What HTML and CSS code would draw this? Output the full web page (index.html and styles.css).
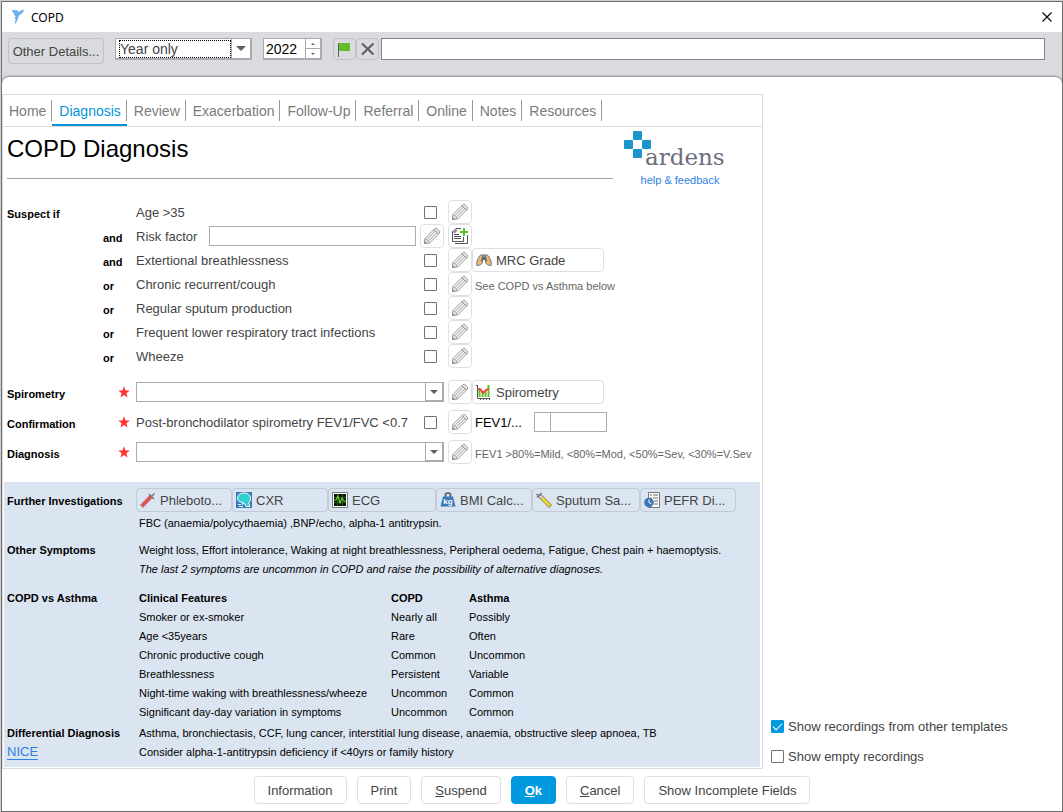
FILE: index.html
```html
<!DOCTYPE html>
<html lang="en">
<head>
    <meta charset="UTF-8">
    <meta name="viewport" content="width=device-width, initial-scale=1.0">
    <title>COPD</title>
    <link rel="stylesheet" href="styles.css">
</head>
<body>
    <!-- shared icons -->
    <svg class="sprite" aria-hidden="true">
        <symbol id="pencil" viewBox="0 0 18 18">
            <path d="M1.5 16.5 L2 11.5 L11.5 2 Q13 0.8 14.2 2 L16 3.8 Q17.2 5 16 6.5 L6.5 16 Z" fill="#fff" stroke="#8e8e8e" stroke-width="1"/>
            <path d="M3.5 13 L13.2 3.2 M5 14.5 L14.8 4.8 M2.2 11.6 L6.4 15.8 M11 2.6 L15.4 7" fill="none" stroke="#8e8e8e" stroke-width="1"/>
            <path d="M1.2 16.8 L1.8 13.8 L4.2 16.2 Z" fill="#8e8e8e"/>
        </symbol>
        <symbol id="star" viewBox="0 0 12 12">
            <path d="M6 0.3 L7.5 4.4 L11.8 4.5 L8.4 7.2 L9.6 11.5 L6 9 L2.4 11.5 L3.6 7.2 L0.2 4.5 L4.5 4.4 Z" fill="#f33"/>
        </symbol>
        <symbol id="arrow" viewBox="0 0 8 4">
            <path d="M0 0 H8 L4 4 Z" fill="#606060"/>
        </symbol>
    </svg>

    <div class="window">
        <header class="titlebar">
            <svg class="app-icon" viewBox="0 0 14 16" aria-hidden="true">
                <path d="M0.5 1.5 Q4 0.5 6.5 1.5 L8 3 Q10 0.5 13.5 0.8 Q12.8 2 12 2.4 Q12.6 2.8 12 3.4 Q10 5 8 6.5 L7 9.5 L4.6 15.2 L4 14 L4.6 9.8 L3 8.8 L5 7.5 Q3 6.5 2.8 4.2 Z" fill="#6ab0ee"/>
            </svg>
            <span class="window-title">COPD</span>
            <button class="close" aria-label="Close">
                <svg viewBox="0 0 10 10"><path d="M0.5 0.5 L9.5 9.5 M9.5 0.5 L0.5 9.5" stroke="#000" stroke-width="1.1"/></svg>
            </button>
        </header>

        <div class="toolbar">
            <button class="btn details">Other Details...</button>
            <div class="combo date-combo">
                <select aria-label="Date precision"><option>Year only</option></select>
                <span class="combo-arrow"><svg><use href="#arrow"/></svg></span>
            </div>
            <div class="spinner">
                <input type="text" value="2022" aria-label="Year">
                <div class="spin-buttons">
                    <button aria-label="Increase"><svg viewBox="0 0 4 2"><path d="M0 2 L2 0 L4 2 Z" fill="#606060"/></svg></button>
                    <button aria-label="Decrease"><svg viewBox="0 0 4 2"><path d="M0 0 L2 2 L4 0 Z" fill="#606060"/></svg></button>
                </div>
            </div>
            <div class="tool-icons">
                <button class="btn icon-btn small" aria-label="Flag">
                    <svg viewBox="0 0 16 16"><path d="M2 2 H13 V10 H2 Z" fill="#63be27"/><path d="M1.5 2 V16" stroke="#606060"/></svg>
                </button>
                <button class="btn icon-btn small" aria-label="Clear">
                    <svg viewBox="0 0 16 16"><path d="M2 2.5 L13.5 13.5 M13.5 2.5 L2 13.5" stroke="#606060" stroke-width="2.2"/></svg>
                </button>
            </div>
            <input class="note" type="text" aria-label="Note">
        </div>

        <main class="workspace">
            <div class="columns">
                <section class="template">
                    <nav class="tabs">
                        <a href="#">Home</a>
                        <a href="#" class="active">Diagnosis</a>
                        <a href="#">Review</a>
                        <a href="#">Exacerbation</a>
                        <a href="#">Follow-Up</a>
                        <a href="#">Referral</a>
                        <a href="#">Online</a>
                        <a href="#">Notes</a>
                        <a href="#">Resources</a>
                    </nav>

                    <div class="heading">
                        <h1>COPD Diagnosis</h1>
                        <div class="brand">
                            <div class="logo">
                                <svg viewBox="0 0 28 28" aria-hidden="true">
                                    <g fill="#1c94cc">
                                        <rect x="9" y="0" width="9" height="9" rx="1"/>
                                        <rect x="0" y="9" width="9" height="9" rx="1"/>
                                        <rect x="18" y="9" width="9" height="9" rx="1"/>
                                        <rect x="9" y="18" width="9" height="9" rx="1"/>
                                    </g>
                                </svg>
                                <span>ardens</span>
                            </div>
                            <a href="#">help &amp; feedback</a>
                        </div>
                    </div>

                    <form class="criteria">
                        <div class="row">
                            <span class="label">Suspect if</span>
                            <span></span>
                            <label class="field" for="age">Age &gt;35</label>
                            <input type="checkbox" id="age">
                            <button type="button" class="btn icon-btn" aria-label="Edit"><svg><use href="#pencil"/></svg></button>
                        </div>
                        <div class="row">
                            <span></span>
                            <span class="label">and</span>
                            <span class="field"><label for="risk">Risk factor</label><input class="box" type="text" id="risk"></span>
                            <button type="button" class="btn icon-btn" aria-label="Edit"><svg><use href="#pencil"/></svg></button>
                            <button type="button" class="btn icon-btn" aria-label="Add note">
                                <svg viewBox="0 0 18 18">
                                    <path d="M10 1.5 H5 L1.5 5 V14.5 H12.5 V10 M5 1.5 V5 H1.5 M16.5 8 V16.5 H4" fill="none" stroke="#555"/>
                                    <path d="M3 7.5 H8 M3 9.5 H10 M3 11.5 H10" stroke="#555"/>
                                    <path d="M13 1 V9 M9 5 H17" stroke="#63be27" stroke-width="2"/>
                                </svg>
                            </button>
                        </div>
                        <div class="row">
                            <span></span>
                            <span class="label">and</span>
                            <label class="field" for="breath">Extertional breathlessness</label>
                            <input type="checkbox" id="breath">
                            <button type="button" class="btn icon-btn" aria-label="Edit"><svg><use href="#pencil"/></svg></button>
                            <button type="button" class="btn link-btn">
                                <svg viewBox="0 0 16 16">
                                    <path d="M6.5 3 Q5 2 3.5 4 Q0.5 8 0.5 12.5 Q0.5 14 2 13.5 Q5 13 6.5 11 Z M9.5 3 Q11 2 12.5 4 Q15.5 8 15.5 12.5 Q15.5 14 14 13.5 Q11 13 9.5 11 Z" fill="#e3b878" stroke="#777"/>
                                    <path d="M8 2 V8 M8 6 L5 9 M8 6 L11 9 M5.5 6 H10.5" fill="none" stroke="#666" stroke-width="1.4"/>
                                </svg>
                                MRC Grade
                            </button>
                        </div>
                        <div class="row">
                            <span></span>
                            <span class="label">or</span>
                            <label class="field" for="cough">Chronic recurrent/cough</label>
                            <input type="checkbox" id="cough">
                            <button type="button" class="btn icon-btn" aria-label="Edit"><svg><use href="#pencil"/></svg></button>
                            <span class="hint">See COPD vs Asthma below</span>
                        </div>
                        <div class="row">
                            <span></span>
                            <span class="label">or</span>
                            <label class="field" for="sputum">Regular sputum production</label>
                            <input type="checkbox" id="sputum">
                            <button type="button" class="btn icon-btn" aria-label="Edit"><svg><use href="#pencil"/></svg></button>
                        </div>
                        <div class="row">
                            <span></span>
                            <span class="label">or</span>
                            <label class="field" for="infections">Frequent lower respiratory tract infections</label>
                            <input type="checkbox" id="infections">
                            <button type="button" class="btn icon-btn" aria-label="Edit"><svg><use href="#pencil"/></svg></button>
                        </div>
                        <div class="row">
                            <span></span>
                            <span class="label">or</span>
                            <label class="field" for="wheeze">Wheeze</label>
                            <input type="checkbox" id="wheeze">
                            <button type="button" class="btn icon-btn" aria-label="Edit"><svg><use href="#pencil"/></svg></button>
                        </div>

                        <div class="row spaced first">
                            <label class="label" for="spirometry">Spirometry</label>
                            <svg class="star"><use href="#star"/></svg>
                            <div class="combo wide">
                                <select id="spirometry"><option></option></select>
                                <span class="combo-arrow"><svg><use href="#arrow"/></svg></span>
                            </div>
                            <button type="button" class="btn icon-btn" aria-label="Edit"><svg><use href="#pencil"/></svg></button>
                            <button type="button" class="btn link-btn">
                                <svg viewBox="0 0 16 16">
                                    <path d="M3.5 4 V13 M6.5 8 V13 M9.5 7 V13 M12.5 1 V13" stroke="#63be27" stroke-width="2"/>
                                    <path d="M2 5 L4.5 5.5 L7 9 L10 6 L12.5 5" fill="none" stroke="#f4453c" stroke-width="2"/>
                                    <path d="M1.5 1 V14.5 H14" fill="none" stroke="#555"/>
                                    <path d="M0 1.5 H2 M4.5 14 V16 M7.5 14 V16 M10.5 14 V16 M13.5 14 V16" stroke="#555"/>
                                </svg>
                                Spirometry
                            </button>
                        </div>
                        <div class="row spaced">
                            <span class="label">Confirmation</span>
                            <svg class="star"><use href="#star"/></svg>
                            <label class="field" for="fevratio">Post-bronchodilator spirometry FEV1/FVC &lt;0.7</label>
                            <input type="checkbox" id="fevratio">
                            <button type="button" class="btn icon-btn" aria-label="Edit"><svg><use href="#pencil"/></svg></button>
                            <div class="measure">
                                <label for="fev">FEV1/...</label>
                                <input class="box operator" type="text" aria-label="Operator">
                                <input class="box value" type="text" id="fev">
                            </div>
                        </div>
                        <div class="row spaced">
                            <label class="label" for="diagnosis">Diagnosis</label>
                            <svg class="star"><use href="#star"/></svg>
                            <div class="combo wide">
                                <select id="diagnosis"><option></option></select>
                                <span class="combo-arrow"><svg><use href="#arrow"/></svg></span>
                            </div>
                            <button type="button" class="btn icon-btn" aria-label="Edit"><svg><use href="#pencil"/></svg></button>
                            <span class="hint">FEV1 &gt;80%=Mild, &lt;80%=Mod, &lt;50%=Sev, &lt;30%=V.Sev</span>
                        </div>
                    </form>

                    <div class="info">
                        <div class="info-row investigations">
                            <h2>Further Investigations</h2>
                            <div>
                                <div class="launchers">
                                    <button class="btn link-btn">
                                        <svg viewBox="0 0 16 16">
                                            <path d="M1.5 14.5 L11 4.5" stroke="#999" stroke-width="4"/>
                                            <path d="M2 14 L11 4.5" stroke="#ee4b46" stroke-width="3"/>
                                            <path d="M9 2 L14 7 M11.5 4.5 L14.5 1.5" stroke="#777" stroke-width="1.5"/>
                                        </svg>
                                        Phleboto...
                                    </button>
                                    <button class="btn link-btn">
                                        <svg viewBox="0 0 16 16">
                                            <rect width="16" height="16" fill="#3d7ab8"/>
                                            <path d="M1.5 6 Q2 1 8 1 Q14 1 14.5 6 Q15 9 12.5 11 L14 14.5 H10 L9 12 Q7 12 6.5 10 Q2 11 1.5 6 Z" fill="#31d0cc" stroke="#fff"/>
                                            <path d="M2 12.5 H5 M3 14.5 H7 M6.5 11 V13" stroke="#dff" fill="none"/>
                                        </svg>
                                        CXR
                                    </button>
                                    <button class="btn link-btn mid">
                                        <svg viewBox="0 0 16 16">
                                            <rect x="0.5" y="0.5" width="15" height="15" fill="#fff" stroke="#777"/>
                                            <rect x="2" y="2" width="12" height="12" fill="#071407"/>
                                            <path d="M2 5.5 H14 M2 10.5 H14 M5.5 2 V14 M10.5 2 V14" stroke="#245c18" stroke-width="1"/>
                                            <path d="M2 8 H4 L6 4 L8 11 L10 6 L12 9 H14" fill="none" stroke="#65d42b" stroke-width="1.2"/>
                                        </svg>
                                        ECG
                                    </button>
                                    <button class="btn link-btn">
                                        <svg viewBox="0 0 16 16">
                                            <path d="M5.5 5 V3 Q5.5 1 8 1 Q10.5 1 10.5 3 V5" fill="none" stroke="#555" stroke-width="1.6"/>
                                            <path d="M3 4.5 H13 L15.5 14.5 H0.5 Z" fill="#3979b6"/>
                                            <text x="8" y="12" text-anchor="middle" class="kg">kg</text>
                                        </svg>
                                        BMI Calc...
                                    </button>
                                    <button class="btn link-btn mid">
                                        <svg viewBox="0 0 16 16">
                                            <path d="M3.5 3.5 L14.5 14.5" stroke="#777" stroke-width="4"/>
                                            <path d="M6 6 L14 14" stroke="#f0dd20" stroke-width="2.6"/>
                                            <path d="M4 4 L6 6" stroke="#ddd" stroke-width="2.4"/>
                                            <path d="M1 5.5 L5.5 1 M0.5 2 L3 4" stroke="#777" stroke-width="1.5"/>
                                        </svg>
                                        Sputum Sa...
                                    </button>
                                    <button class="btn link-btn">
                                        <svg viewBox="0 0 16 16">
                                            <path d="M4.5 0.5 H15.5 V15.5 H4.5 Z" fill="#fff" stroke="#777"/>
                                            <path d="M6 3 H8 M9 3 H14 M6 6 H8 M9 6 H14 M10 9 H14 M10 12 H14" stroke="#666" stroke-width="1.2"/>
                                            <circle cx="5" cy="10.5" r="4.8" fill="#3979b6"/>
                                            <path d="M5 7.5 V10.5 L7.5 12" fill="none" stroke="#fff"/>
                                        </svg>
                                        PEFR Di...
                                    </button>
                                </div>
                                <p>FBC (anaemia/polycythaemia) ,BNP/echo, alpha-1 antitrypsin.</p>
                            </div>
                        </div>
                        <div class="info-row symptoms">
                            <h2>Other Symptoms</h2>
                            <div>
                                <p>Weight loss, Effort intolerance, Waking at night breathlessness, Peripheral oedema, Fatigue, Chest pain + haemoptysis.</p>
                                <p><em>The last 2 symptoms are uncommon in COPD and raise the possibility of alternative diagnoses.</em></p>
                            </div>
                        </div>
                        <div class="info-row versus">
                            <h2>COPD vs Asthma</h2>
                            <table>
                                <thead>
                                    <tr><th>Clinical Features</th><th>COPD</th><th>Asthma</th></tr>
                                </thead>
                                <tbody>
                                    <tr><td>Smoker or ex-smoker</td><td>Nearly all</td><td>Possibly</td></tr>
                                    <tr><td>Age &lt;35years</td><td>Rare</td><td>Often</td></tr>
                                    <tr><td>Chronic productive cough</td><td>Common</td><td>Uncommon</td></tr>
                                    <tr><td>Breathlessness</td><td>Persistent</td><td>Variable</td></tr>
                                    <tr><td>Night-time waking with breathlessness/wheeze</td><td>Uncommon</td><td>Common</td></tr>
                                    <tr><td>Significant day-day variation in symptoms</td><td>Uncommon</td><td>Common</td></tr>
                                </tbody>
                            </table>
                        </div>
                        <div class="info-row">
                            <div>
                                <h2>Differential Diagnosis</h2>
                                <a href="#" class="nice">NICE</a>
                            </div>
                            <div>
                                <p>Asthma, bronchiectasis, CCF, lung cancer, interstitial lung disease, anaemia, obstructive sleep apnoea, TB</p>
                                <p>Consider alpha-1-antitrypsin deficiency if &lt;40yrs or family history</p>
                            </div>
                        </div>
                    </div>
                </section>

                <aside class="options">
                    <label><input type="checkbox" checked> Show recordings from other templates</label>
                    <label><input type="checkbox"> Show empty recordings</label>
                </aside>
            </div>

            <footer class="actions">
                <button class="btn">Information</button>
                <button class="btn">Print</button>
                <button class="btn"><u>S</u>uspend</button>
                <button class="btn primary"><u>O</u>k</button>
                <button class="btn"><u>C</u>ancel</button>
                <button class="btn">Show Incomplete Fields</button>
            </footer>
        </main>
    </div>
</body>
</html>
```

FILE: styles.css
```css
* {
    box-sizing: border-box;
}

body {
    margin: 0;
    padding: 1px 0 0 1px;
    background-color: #cfd1d4;
    color: #444;
    font-family: "Liberation Sans", Arial, sans-serif;
    font-size: 13px;
}

button, input, select {
    font: inherit;
    color: inherit;
    margin: 0;
}

.sprite {
    display: none;
}

.window {
    display: flex;
    flex-direction: column;
    min-height: calc(100vh - 1px);
    border: 1px solid #6b6b6b;
    background-color: #d9dbdf;
}

/* title bar */
.titlebar {
    display: flex;
    align-items: center;
    height: 30px;
    padding: 0 10px 0 9px;
    background-color: #fff;
}

.app-icon {
    width: 14px;
    height: 16px;
    margin-right: 6px;
}

.window-title {
    flex: 1;
    color: #000;
    font-family: "Noto Sans", sans-serif;
    font-size: 12px;
}

.close {
    display: flex;
    padding: 0;
    border: none;
    background: none;
}

.close svg {
    width: 10px;
    height: 10px;
}

/* buttons */
.btn {
    display: flex;
    align-items: center;
    justify-content: center;
    padding: 0;
    border: 1px solid #dfdfe1;
    border-radius: 4px;
    background: none;
    white-space: nowrap;
}

.icon-btn {
    width: 24px;
    height: 24px;
}

.icon-btn svg {
    width: 18px;
    height: 18px;
}

.icon-btn.small {
    width: 23px;
    height: 22px;
}

.icon-btn.small svg {
    width: 16px;
    height: 16px;
}

.link-btn {
    justify-content: flex-start;
    gap: 4px;
    height: 24px;
    padding: 0 3px;
}

.link-btn svg {
    width: 16px;
    height: 16px;
}

/* drop-downs, text boxes and tick boxes */
.combo {
    display: grid;
    height: 20px;
    border: 1px solid #a9abb0;
    background-color: #fff;
}

.combo select {
    grid-area: 1 / 1;
    width: 100%;
    border: none;
    background: none;
    appearance: none;
    outline: none;
}

.combo-arrow {
    grid-area: 1 / 1;
    justify-self: end;
    display: flex;
    align-items: center;
    justify-content: center;
    width: 18px;
    border: solid #a9abb0;
    border-width: 0 1px 1px;
    pointer-events: none;
}

.combo-arrow svg {
    width: 8px;
    height: 4px;
}

.box {
    height: 20px;
    padding: 0 3px;
    border: 1px solid #a9abb0;
    background-color: #fff;
}

input[type="checkbox"] {
    display: grid;
    place-content: center;
    width: 13px;
    height: 13px;
    border: 1px solid #707070;
    border-radius: 1px;
    background-color: #fff;
    appearance: none;
}

input[type="checkbox"]:checked {
    border-color: #0099e0;
    background-color: #0099e0;
}

input[type="checkbox"]:checked::before {
    content: "";
    width: 8px;
    height: 4px;
    border: solid #fff;
    border-width: 0 0 1px 1px;
    transform: translateY(-1px) rotate(-45deg);
}

/* toolbar */
.toolbar {
    display: flex;
    align-items: flex-start;
    padding: 6px 17px 13px 6px;
}

.toolbar .btn {
    border-color: #c0c2c7;
}

.details {
    width: 96px;
    height: 26px;
    margin-right: 11px;
}

.date-combo {
    width: 137px;
    height: 22px;
    margin-right: 11px;
    border-width: 1px 2px 2px 1px;
    font-size: 14px;
}

.date-combo select {
    width: 112px;
    margin: 1px 0 0 3px;
    padding: 0;
    border: 1px dotted #000;
}

.date-combo .combo-arrow {
    width: 19px;
    border-width: 0 0 0 1px;
}

.date-combo .combo-arrow svg {
    width: 10px;
    height: 5px;
}

.spinner {
    display: flex;
    width: 59px;
    height: 22px;
    margin-right: 11px;
    border: 1px solid #a9abb0;
    border-width: 1px 2px 2px 1px;
    background-color: #fff;
    color: #000;
    font-size: 14px;
}

.spinner input {
    flex: 1;
    min-width: 0;
    padding: 0 2px;
    border: none;
    background: none;
}

.spin-buttons {
    display: flex;
    flex-direction: column;
    width: 15px;
    border-left: 1px solid #a9abb0;
}

.spin-buttons button {
    flex: 1;
    display: flex;
    align-items: center;
    justify-content: center;
    padding: 0;
    border: none;
    background: none;
}

.spin-buttons button + button {
    border-top: 1px solid #a9abb0;
}

.spin-buttons svg {
    width: 4px;
    height: 2px;
}

.tool-icons {
    display: flex;
    margin-right: 2px;
}

.note {
    flex: 1;
    height: 22px;
    border: 1px solid #7e828c;
    background-color: #fff;
}

/* main area */
.workspace {
    flex: 1;
    display: flex;
    flex-direction: column;
    padding-top: 17px;
    border-radius: 7px 7px 0 0;
    background-color: #fff;
    box-shadow: 0 -1px 2px #85878b;
}

.columns {
    flex: 1;
    display: grid;
    grid-template-columns: 1fr 299px;
}

.template {
    display: flex;
    flex-direction: column;
    border: 1px solid #d9dbdf;
}

.tabs {
    display: flex;
    height: 32px;
    border-bottom: 1px solid #d9dbdf;
    font-size: 14px;
}

.tabs a {
    position: relative;
    display: flex;
    align-items: center;
    padding: 0 6px 0 7px;
    color: #7b7b7b;
    text-decoration: none;
}

.tabs a:first-child {
    padding-left: 6px;
}

.tabs a::after {
    content: "";
    position: absolute;
    top: 5px;
    right: 0;
    bottom: 5px;
    border-right: 1px solid #999;
}

.tabs .active {
    color: #0095d9;
    box-shadow: inset 0 -2px #0095d9;
}

.heading {
    display: grid;
    grid-template-columns: 606px 1fr;
    height: 73px;
    padding-left: 4px;
}

h1 {
    height: 52px;
    margin: 0;
    padding-top: 8px;
    border-bottom: 1px solid #a0a0a0;
    color: #000;
    font-size: 24px;
    font-weight: normal;
    line-height: 28px;
}

.brand {
    width: 112px;
    margin-left: 11px;
    padding-top: 4px;
    text-align: center;
}

.brand a {
    display: block;
    color: #2f7fdf;
    font-size: 11px;
    line-height: 14px;
    text-decoration: none;
}

.logo {
    display: flex;
    height: 42px;
}

.logo svg {
    flex: none;
    width: 28px;
    height: 28px;
}

.logo span {
    margin: 11px 0 0 -7px;
    color: #6d6e7c;
    font-family: "DejaVu Serif", serif;
    font-size: 23px;
    font-weight: 200;
    line-height: 30px;
}

/* entry form */
.criteria {
    padding: 0 4px 18px;
}

.row {
    display: grid;
    grid-template-columns: 96px 33px 280px 32px 24px 1fr;
    align-items: center;
    height: 24px;
}

.row.spaced {
    margin-top: 6px;
}

.row.first {
    margin-top: 12px;
}

.row > input[type="checkbox"] {
    margin-left: 8px;
}

.row > .field + .icon-btn {
    margin-left: 4px;
}

.label {
    padding-top: 3px;
    color: #000;
    font-size: 11px;
    font-weight: bold;
}

.field {
    display: flex;
    align-items: center;
    justify-content: space-between;
    white-space: nowrap;
}

.field .box {
    width: 207px;
}

.star {
    width: 12px;
    height: 12px;
    margin-left: 15px;
}

.combo.wide {
    grid-column: span 2;
    margin-right: 4px;
}

.row .link-btn {
    width: 132px;
}

.hint {
    padding: 3px 0 0 3px;
    color: #666;
    font-size: 11px;
    white-space: nowrap;
}

.measure {
    display: flex;
    align-items: center;
    padding-left: 3px;
    color: #000;
}

.measure label {
    width: 59px;
}

.measure .operator {
    width: 17px;
}

.measure .value {
    width: 57px;
    margin-left: -1px;
}

/* guidance */
.info {
    flex: 1;
    margin: 0 2px 1px 1px;
    padding: 6px 3px 5px;
    background-color: #dbe5f1;
    color: #000;
    font-size: 11px;
    line-height: 19px;
}

.info-row {
    display: grid;
    grid-template-columns: 129px 1fr;
}

.info h2 {
    margin: 0;
    font-size: 11px;
    white-space: nowrap;
}

.info p {
    margin: 0;
    padding-left: 3px;
    white-space: nowrap;
}

.investigations {
    margin-bottom: 8px;
}

.investigations h2 {
    padding-top: 4px;
}

.investigations p {
    padding-top: 2px;
}

.launchers {
    display: flex;
}

.launchers .btn {
    width: 96px;
    border-color: #c0c9d6;
    color: #444;
    font-size: 13px;
}

.launchers .mid {
    width: 108px;
}

.kg {
    fill: #fff;
    font-size: 8px;
    font-weight: bold;
}

.symptoms {
    margin-bottom: 10px;
}

.info table {
    width: 432px;
    border-collapse: collapse;
    table-layout: fixed;
}

.info th,
.info td {
    padding: 0 0 0 3px;
    text-align: left;
    white-space: nowrap;
}

.info th:nth-child(1) {
    width: 252px;
}

.info th:nth-child(2) {
    width: 78px;
}

.versus {
    margin-bottom: 2px;
}

.nice {
    display: inline-block;
    border-bottom: 1px solid #2f7fdf;
    color: #2f7fdf;
    font-size: 13px;
    line-height: 15px;
    text-decoration: none;
}

/* right hand options */
.options {
    display: flex;
    flex-direction: column;
    justify-content: flex-end;
    gap: 14px;
    padding: 0 8px 5px;
}

.options label {
    display: flex;
    align-items: center;
    gap: 4px;
    height: 16px;
}

/* bottom buttons */
.actions {
    display: flex;
    justify-content: center;
    gap: 10px;
    padding: 7px 0;
}

.actions .btn {
    display: block;
    height: 28px;
    padding: 0 13px;
}

.actions .primary {
    border-color: #0099e0;
    background-color: #0099e0;
    color: #fff;
    font-weight: bold;
}
```
